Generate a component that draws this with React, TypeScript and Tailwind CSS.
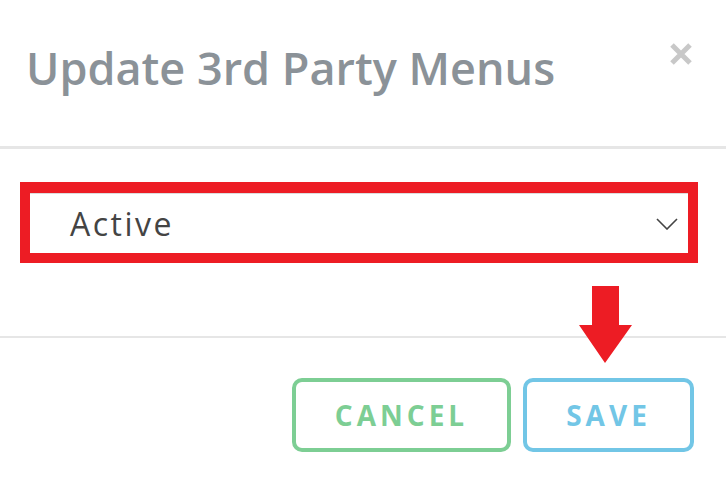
import React from "react";

export default function App() {
  return (
    <div className="relative w-[726px] h-[481px] overflow-hidden bg-white font-['Open_Sans',sans-serif]">
      {/* Header */}
      <div className="flex h-[149px] items-start justify-between border-b-[3px] border-[#e6e6e6] pl-[26px] pr-[33px]">
        <h1 className="pt-[45px] text-[45px] font-semibold leading-none tracking-[0px] text-[#8b9298]">
          Update 3rd Party Menus
        </h1>
        <button className="mt-[43px]" aria-label="close">
          <svg width="24" height="22" viewBox="0 0 24 22">
            <path d="M3 2 L21 20 M21 2 L3 20" stroke="#c8c8c8" strokeWidth="5" strokeLinecap="butt" />
          </svg>
        </button>
      </div>

      {/* Body */}
      <div className="h-[189px] border-b-2 border-[#e6e6e6] pt-[33px] pl-[20px] pr-[28px]">
        <div className="h-[81px] border-[10px] border-t-[11px] border-[#ed1c24]">
          <div className="flex h-full items-center justify-between border-t border-[#dcdcdc] pl-[40px] pr-[10px]">
            <span className="text-[32px] leading-none tracking-[2.5px] text-[#444444]">Active</span>
            <svg width="22" height="12" viewBox="0 0 22 12">
              <path d="M1 1 L11 11 L21 1" fill="none" stroke="#444444" strokeWidth="1.6" />
            </svg>
          </div>
        </div>
      </div>

      {/* Footer */}
      <div className="flex justify-end gap-[12px] pt-[40px] pr-[32px]">
        <button className="flex h-[74px] w-[219px] items-center justify-center rounded-[10px] border-4 border-[#7dce94] text-[28px] font-bold leading-none tracking-[4px] text-[#7dce94]">
          CANCEL
        </button>
        <button className="flex h-[74px] w-[171px] items-center justify-center rounded-[10px] border-4 border-[#72c6e6] text-[28px] font-bold leading-none tracking-[4px] text-[#72c6e6]">
          SAVE
        </button>
      </div>

      {/* Red arrow annotation */}
      <svg className="absolute left-[579px] top-[286px]" width="53" height="77" viewBox="0 0 53 77">
        <path d="M13 0 H40 V39 H53 L26 77 L0 39 H13 Z" fill="#ed1c24" />
      </svg>
    </div>
  );
}
